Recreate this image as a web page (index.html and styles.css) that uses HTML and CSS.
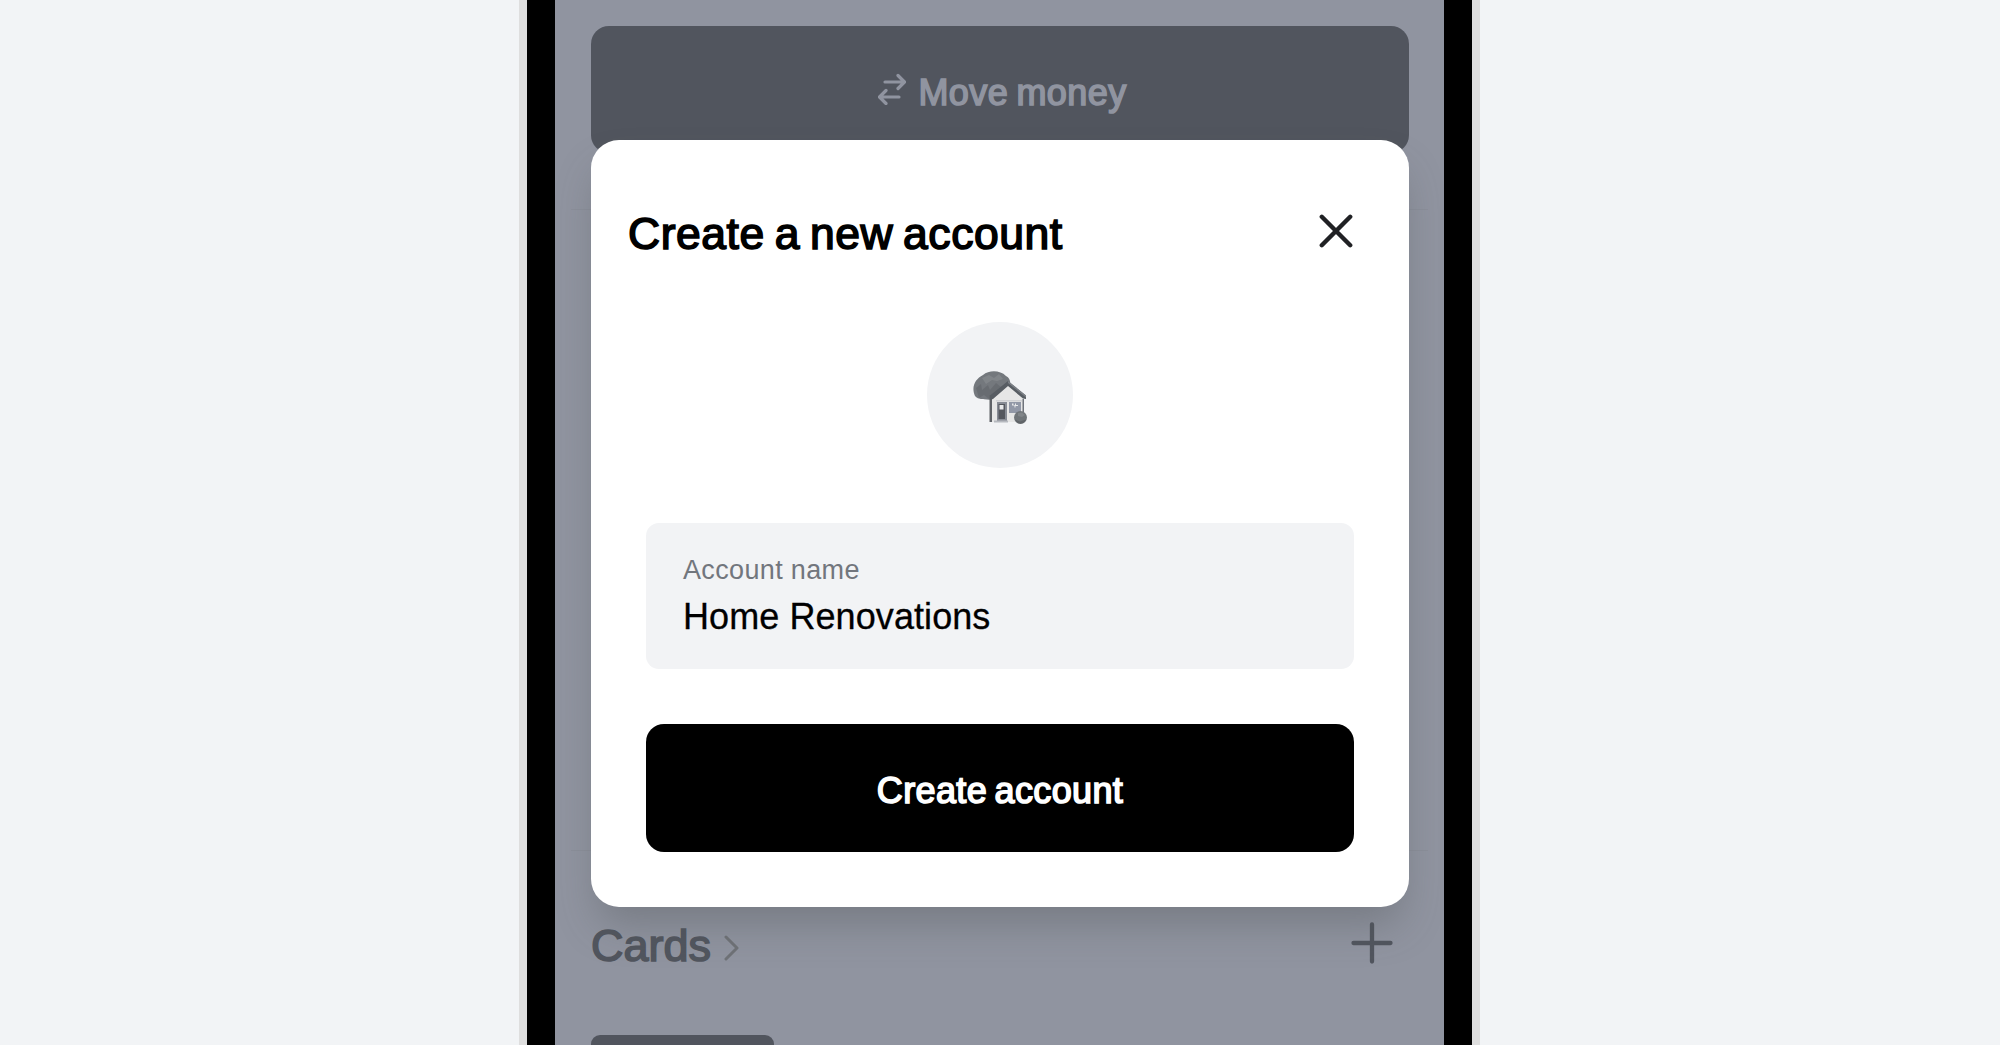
FILE: index.html
```html
<!DOCTYPE html>
<html lang="en">
<head>
<meta charset="utf-8">
<title>Create a new account</title>
<link rel="stylesheet" href="styles.css">
</head>
<body>
<main class="phone">
  <div class="screen">
    <section class="balance">
      <button class="move" type="button">
        <svg class="move-icon" width="28" height="32" viewBox="0 0 28 32"><path d="M7 9H26M20 2.500L26.500 9L20 15.500M21 24H2M8 17.500L1.500 24L8 30.500"/></svg>
        <span class="bold">Move money</span>
      </button>
    </section>
    <section class="accounts"></section>
    <section class="cards">
      <header class="cards-head">
        <h2 class="cards-title bold">Cards</h2>
        <svg class="chevron" width="16" height="26" viewBox="0 0 16 26"><path d="M2 2L13 13L2 24"/></svg>
        <svg class="plus" width="42" height="42" viewBox="0 0 42 42"><path d="M21 2.500V39.500M2.500 21H39.500"/></svg>
      </header>
      <div class="card"></div>
    </section>
  </div>
  <div class="modal" role="dialog">
    <header class="modal-head">
      <h1 class="modal-title bold">Create a new account</h1>
      <svg class="close" width="34" height="34" viewBox="0 0 34 34"><path d="M2.800 2.800L31.200 31.200M31.200 2.800L2.800 31.200"/></svg>
    </header>
    <div class="avatar">
      <svg width="56" height="56" viewBox="0 0 56 56">
        <path fill="#74787d" d="M3 26C-1 17 3 9 11 5C17 0 28 0 34 6C40 9 39 17 35 20L20 30C13 29 6 30 3 26Z"/>
        <path fill="#62666c" d="M4 18L9 14L10 20L16 15L18 20L24 13L29 17L23 27L17 29L12 25L7 28Z" opacity=".65"/>
        <path fill="#92959a" d="M10 8L17 5L22 8L27 4L31 9L25 11L20 10L14 14Z" opacity=".45"/>
        <path fill="#5f6267" d="M17.500 25L20.500 26V52H17.500Z"/>
        <path fill="#e6e6e6" d="M20 27L36 14L52 27V52H20Z"/>
        <path fill="#585d63" d="M18 30V25.500L36 11L54 25.500V29L51 28.500L36 16L21 29Z"/>
        <path fill="#7b7f85" d="M36 11L54 25.500V27.500L36 13Z"/>
        <path fill="#d0d1d4" d="M24 30H50V31.500H24Z"/>
        <path fill="#6f737b" d="M50.500 29H52V42H50.500Z"/>
        <path fill="#888c95" d="M25 32H35V51H25Z"/>
        <path fill="#54575e" d="M26.500 34H33V49H26.500Z"/>
        <path fill="#e8e9ea" d="M27.500 35H31.500V39.500H27.500Z"/>
        <path fill="#9298a7" d="M37 32H49V43H37Z"/>
        <path fill="#e7e8ea" d="M40 33.500H41.500V35H43V33.500H44V35H46V36H43.500V37.500H42.500V35.500H40Z"/>
        <path fill="#b6b9bf" d="M22 50.500H36V52.500H22Z"/>
        <circle cx="48.500" cy="47.500" r="6.500" fill="#707579"/>
        <path fill="#8c9095" d="M46 43L50 42.500L53 45L50 47L46 46Z" opacity=".6"/>
        <path fill="#55595e" d="M43 49.500L48 51.500L54 49.500C53 54.500 45 55.500 43 49.500Z" opacity=".6"/>
      </svg>
    </div>
    <label class="field">
      <span class="field-label">Account name</span>
      <span class="field-value">Home Renovations</span>
    </label>
    <button class="create bold" type="button">Create account</button>
  </div>
</main>
</body>
</html>
```
FILE: styles.css
```css
* {
  box-sizing: border-box;
}

body {
  margin: 0;
  height: 1045px;
  overflow: hidden;
  background: #f2f4f6;
  font-family: "Liberation Sans", Arial, sans-serif;
}

h1,
h2 {
  margin: 0;
  font-weight: 400;
}

button {
  border: 0;
  font: inherit;
}

svg {
  display: block;
  flex: none;
  fill: none;
  stroke-linecap: round;
  stroke-linejoin: round;
}

/* Medium weight, between the regular and bold faces */
.bold {
  -webkit-text-stroke: 1.6px currentColor;
}

.phone {
  position: relative;
  width: 961px;
  height: 1045px;
  margin-left: 519px;
  border: solid #dedede;
  border-width: 0 8px;
  background: #000;
  padding: 0 28px;
}

.screen {
  height: 1045px;
  background: #9094a0;
  overflow: hidden;
}

.balance {
  height: 209px;
  padding: 26px 35px 0 36px;
}

.move {
  display: flex;
  align-items: center;
  justify-content: center;
  gap: 12px;
  width: 100%;
  height: 127px;
  padding: 6px 0 0 5px;
  border-radius: 18px;
  background: #51555e;
  color: #9094a0;
  font-size: 36px;
  letter-spacing: .4px;
  word-spacing: -2px;
}

.move-icon {
  margin-top: -7px;
  stroke: #9094a0;
  stroke-width: 3.200;
}

.accounts {
  height: 642px;
  margin: 0 16px;
  border: solid #8b8f9a;
  border-width: 1px 0;
}

.cards {
  padding: 62px 35px 0 36px;
}

.cards-head {
  display: flex;
  align-items: center;
  height: 66px;
}

.cards-title {
  color: #51555e;
  font-size: 45px;
  line-height: 60px;
}

.chevron {
  margin: 4px 0 0 13px;
  stroke: #6f7277;
  stroke-width: 3;
}

.plus {
  margin: -6px 16px 0 auto;
  stroke: #51555e;
  stroke-width: 4.300;
}

.card {
  width: 183px;
  height: 110px;
  margin-top: 56px;
  border-radius: 9px;
  background: #51555e;
}

.modal {
  position: absolute;
  top: 140px;
  left: 64px;
  width: 818px;
  height: 767px;
  padding: 60px 55px;
  border-radius: 28px;
  background: #fff;
  box-shadow: 0 24px 40px -8px rgba(80, 86, 88, .4);
}

.modal-head {
  display: flex;
  align-items: center;
  justify-content: space-between;
  height: 68px;
  margin: 0 1px 0 -18px;
}

.modal-title {
  color: #000;
  font-size: 44.500px;
  line-height: 60px;
  letter-spacing: .54px;
  word-spacing: -3px;
}

.close {
  margin-top: -7px;
  stroke: #202124;
  stroke-width: 4.400;
}

.avatar {
  display: flex;
  align-items: center;
  justify-content: center;
  width: 146px;
  height: 146px;
  margin: 54px auto 0;
  padding-top: 6px;
  border-radius: 50%;
  background: #f2f3f5;
}

.field {
  display: flex;
  flex-direction: column;
  height: 146px;
  margin-top: 55px;
  padding: 29px 37px 0;
  border-radius: 13px;
  background: #f2f3f5;
}

.field-label {
  color: #72767d;
  font-size: 27px;
  line-height: 36px;
  letter-spacing: .35px;
}

.field-value {
  color: #000;
  font-size: 36px;
  line-height: 58px;
  letter-spacing: .08px;
  -webkit-text-stroke: .3px currentColor;
}

.create {
  display: block;
  width: 100%;
  height: 128px;
  margin-top: 55px;
  padding: 5px 0 0;
  border-radius: 18px;
  background: #000;
  color: #fff;
  font-size: 36px;
  letter-spacing: .38px;
  word-spacing: -3px;
}
```
